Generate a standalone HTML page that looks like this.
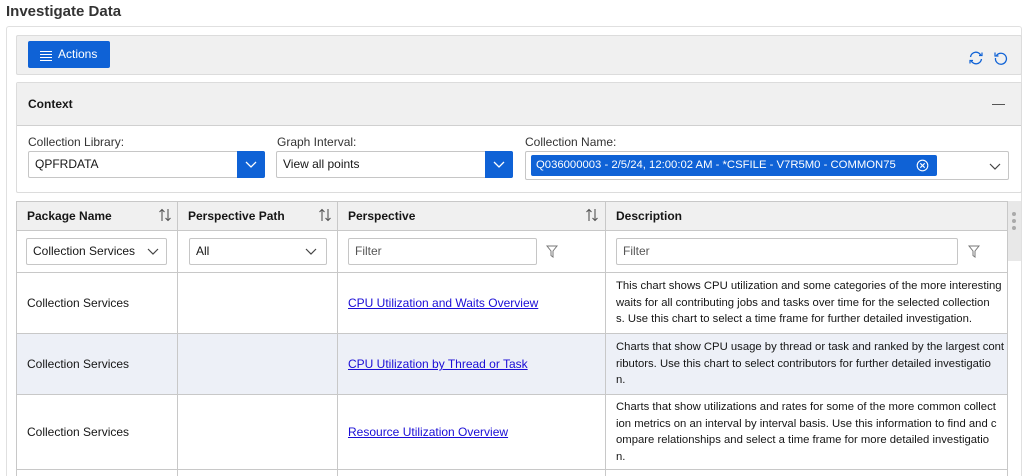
<!DOCTYPE html>
<html><head><meta charset="utf-8"><style>
*{box-sizing:border-box;margin:0;padding:0}
html,body{width:1024px;height:476px;overflow:hidden}
body{background:#fff;font-family:"Liberation Sans",sans-serif;font-size:12px;color:#161616;position:relative}
.a{position:absolute}
.sel{position:absolute;border:1px solid #c6c6c6;background:#fff;border-radius:2px;height:27px;padding:0 0 0 6px;line-height:25px;font-size:12px}
.bb{position:absolute;background:#0f62d6;border-radius:0 2px 2px 0;top:-1px;right:-1px;width:28px;height:27px}
.cell{position:absolute;border-right:1px solid #c8c8c8;border-bottom:1px solid #c8c8c8}
.hd{font-weight:bold;font-size:12px;padding:7px 10px;background:#f0f0f0}
.lk{color:#1a0dd6;text-decoration:underline}
.desc{line-height:16.5px;padding:0 0 0 10px;white-space:nowrap;overflow:hidden;font-size:11.3px}
</style></head><body>
<div class="a" style="left:6px;top:3px;font-weight:bold;font-size:15px;color:#333">Investigate Data</div>
<div class="a" style="left:6px;top:26px;width:1016px;height:460px;border:1px solid #e0e0e0;border-radius:3px"></div>
<div class="a" style="left:16px;top:35px;width:1006px;height:40px;background:#f0f0f0;border:1px solid #dcdcdc;border-radius:2px"></div>
<div class="a" style="left:28px;top:41px;width:82px;height:27px;background:#0f62d6;border-radius:2px;color:#fff;line-height:27px;padding-left:30px;font-size:12px">Actions</div>
<svg class="a" style="left:40px;top:50px" width="12" height="11"><path d="M0 1.5H12M0 4.5H12M0 7.5H12M0 10.5H12" stroke="#fff" stroke-width="1"/></svg>
<svg class="a" style="left:967px;top:49px" width="18" height="18" viewBox="0 0 18 18"><path d="M3.5 8a5.5 5.5 0 0 1 10.5-1.5M14.5 10a5.5 5.5 0 0 1-10.5 1.5" fill="none" stroke="#0f62d6" stroke-width="1.3"/><path d="M12 6.5h3v-3M6 11.5H3v3" fill="none" stroke="#0f62d6" stroke-width="1.2"/></svg>
<svg class="a" style="left:992px;top:49px" width="18" height="18" viewBox="0 0 18 18"><path d="M4.5 6.5A5.5 5.5 0 1 1 3.5 9" fill="none" stroke="#0f62d6" stroke-width="1.3"/><path d="M3 3.5v3.5h3.5" fill="none" stroke="#0f62d6" stroke-width="1.2"/></svg>
<div class="a" style="left:16px;top:82px;width:1006px;height:111px;border:1px solid #dcdcdc;border-radius:2px;background:#fff"></div>
<div class="a" style="left:17px;top:83px;width:1004px;height:43px;background:#f0f0f0;border-bottom:1px solid #d0d0d0"></div>
<div class="a" style="left:28px;top:97px;font-weight:bold">Context</div>
<div class="a" style="left:992px;top:104px;width:13px;height:1px;background:#555"></div>
<div class="a" style="left:28px;top:135px;color:#333">Collection Library:</div>
<div class="sel" style="left:28px;top:151px;width:237px">QPFRDATA<div class="bb"><svg width="28" height="27"><path d="M9 11l5 5 5-5" fill="none" stroke="#fff" stroke-width="1.3"/></svg></div></div>
<div class="a" style="left:277px;top:135px;color:#333">Graph Interval:</div>
<div class="sel" style="left:276px;top:151px;width:237px">View all points<div class="bb"><svg width="28" height="27"><path d="M9 11l5 5 5-5" fill="none" stroke="#fff" stroke-width="1.3"/></svg></div></div>
<div class="a" style="left:525px;top:135px;color:#333">Collection Name:</div>
<div class="sel" style="left:525px;top:151px;width:484px;height:29px;padding:0">
<div class="a" style="left:5px;top:3px;width:406px;height:21px;background:#0f62d6;color:#fff;border-radius:2px;line-height:21px;padding-left:5px;font-size:11.3px;white-space:nowrap">Q036000003 - 2/5/24, 12:00:02 AM - *CSFILE - V7R5M0 - COMMON75</div>
<svg class="a" style="left:390px;top:7px" width="13" height="13"><circle cx="6.5" cy="6.5" r="5.3" fill="none" stroke="#fff" stroke-width="1.1"/><path d="M4.3 4.3l4.4 4.4M8.7 4.3l-4.4 4.4" stroke="#fff" stroke-width="1.1"/></svg>
<svg class="a" style="left:462px;top:8px" width="14" height="12"><path d="M2 4l5 5 5-5" fill="none" stroke="#444" stroke-width="1.2"/></svg>
</div>
<div class="a" style="left:16px;top:201px;width:992px;height:280px;border-left:1px solid #c8c8c8;border-top:1px solid #c8c8c8"></div>
<div class="a" style="left:1008px;top:201px;width:13px;height:60px;background:#e8e8e8"></div>
<div class="a" style="left:1012px;top:212px;width:4px;height:4px;border-radius:2px;background:#aaa;box-shadow:0 7px 0 #aaa,0 14px 0 #aaa"></div>
<div class="cell hd" style="left:17px;top:202px;width:161px;height:29px">Package Name</div>
<div class="cell hd" style="left:178px;top:202px;width:160px;height:29px">Perspective Path</div>
<div class="cell hd" style="left:338px;top:202px;width:268px;height:29px">Perspective</div>
<div class="cell hd" style="left:606px;top:202px;width:402px;height:29px">Description</div>
<svg class="a" style="left:159px;top:208px" width="12" height="14"><path d="M3 13V1.5M0.5 4L3 1.5 5.5 4M9 1v11.5M6.5 10L9 12.5 11.5 10" fill="none" stroke="#555" stroke-width="1.1"/></svg>
<svg class="a" style="left:319px;top:208px" width="12" height="14"><path d="M3 13V1.5M0.5 4L3 1.5 5.5 4M9 1v11.5M6.5 10L9 12.5 11.5 10" fill="none" stroke="#555" stroke-width="1.1"/></svg>
<svg class="a" style="left:586px;top:208px" width="12" height="14"><path d="M3 13V1.5M0.5 4L3 1.5 5.5 4M9 1v11.5M6.5 10L9 12.5 11.5 10" fill="none" stroke="#555" stroke-width="1.1"/></svg>
<div class="cell" style="left:17px;top:231px;width:161px;height:42px"></div>
<div class="cell" style="left:178px;top:231px;width:160px;height:42px"></div>
<div class="cell" style="left:338px;top:231px;width:268px;height:42px"></div>
<div class="cell" style="left:606px;top:231px;width:402px;height:42px"></div>
<div class="sel" style="left:26px;top:238px;width:141px;height:27px">Collection Services<svg class="a" style="left:120px;top:8px" width="12" height="10"><path d="M1 2l5 5 5-5" fill="none" stroke="#444" stroke-width="1.2"/></svg></div>
<div class="sel" style="left:189px;top:238px;width:138px;height:27px">All<svg class="a" style="left:115px;top:8px" width="12" height="10"><path d="M1 2l5 5 5-5" fill="none" stroke="#444" stroke-width="1.2"/></svg></div>
<div class="sel" style="left:348px;top:238px;width:189px;height:27px;color:#555">Filter</div>
<div class="sel" style="left:616px;top:238px;width:342px;height:27px;color:#555">Filter</div>
<svg class="a" style="left:546px;top:245px" width="12" height="13"><path d="M1 1h10L7 6v6L5 10.5V6z" fill="none" stroke="#777" stroke-width="1"/></svg>
<svg class="a" style="left:968px;top:245px" width="12" height="13"><path d="M1 1h10L7 6v6L5 10.5V6z" fill="none" stroke="#777" stroke-width="1"/></svg>
<div class="cell" style="left:17px;top:273px;width:161px;height:61px;padding:23px 0 0 10px">Collection Services</div>
<div class="cell" style="left:178px;top:273px;width:160px;height:61px"></div>
<div class="cell" style="left:338px;top:273px;width:268px;height:61px;padding:23px 0 0 10px"><span class="lk">CPU Utilization and Waits Overview</span></div>
<div class="cell desc" style="left:606px;top:273px;width:402px;height:61px;padding-top:5px">This chart shows CPU utilization and some categories of the more interesting<br>waits for all contributing jobs and tasks over time for the selected collection<br>s. Use this chart to select a time frame for further detailed investigation.</div>
<div class="cell" style="left:17px;top:334px;width:161px;height:61px;padding:23px 0 0 10px;background:#edf0f7">Collection Services</div>
<div class="cell" style="left:178px;top:334px;width:160px;height:61px;background:#edf0f7"></div>
<div class="cell" style="left:338px;top:334px;width:268px;height:61px;padding:23px 0 0 10px;background:#edf0f7"><span class="lk">CPU Utilization by Thread or Task</span></div>
<div class="cell desc" style="left:606px;top:334px;width:402px;height:61px;padding-top:5px;background:#edf0f7">Charts that show CPU usage by thread or task and ranked by the largest cont<br>ributors. Use this chart to select contributors for further detailed investigatio<br>n.</div>
<div class="cell" style="left:17px;top:395px;width:161px;height:75px;padding:30px 0 0 10px">Collection Services</div>
<div class="cell" style="left:178px;top:395px;width:160px;height:75px"></div>
<div class="cell" style="left:338px;top:395px;width:268px;height:75px;padding:30px 0 0 10px"><span class="lk">Resource Utilization Overview</span></div>
<div class="cell desc" style="left:606px;top:395px;width:402px;height:75px;padding-top:4px">Charts that show utilizations and rates for some of the more common collect<br>ion metrics on an interval by interval basis. Use this information to find and c<br>ompare relationships and select a time frame for more detailed investigatio<br>n.</div>
<div class="cell" style="left:17px;top:470px;width:161px;height:20px"></div>
<div class="cell" style="left:178px;top:470px;width:160px;height:20px"></div>
<div class="cell" style="left:338px;top:470px;width:268px;height:20px"></div>
<div class="cell" style="left:606px;top:470px;width:402px;height:20px"></div>
</body></html>
